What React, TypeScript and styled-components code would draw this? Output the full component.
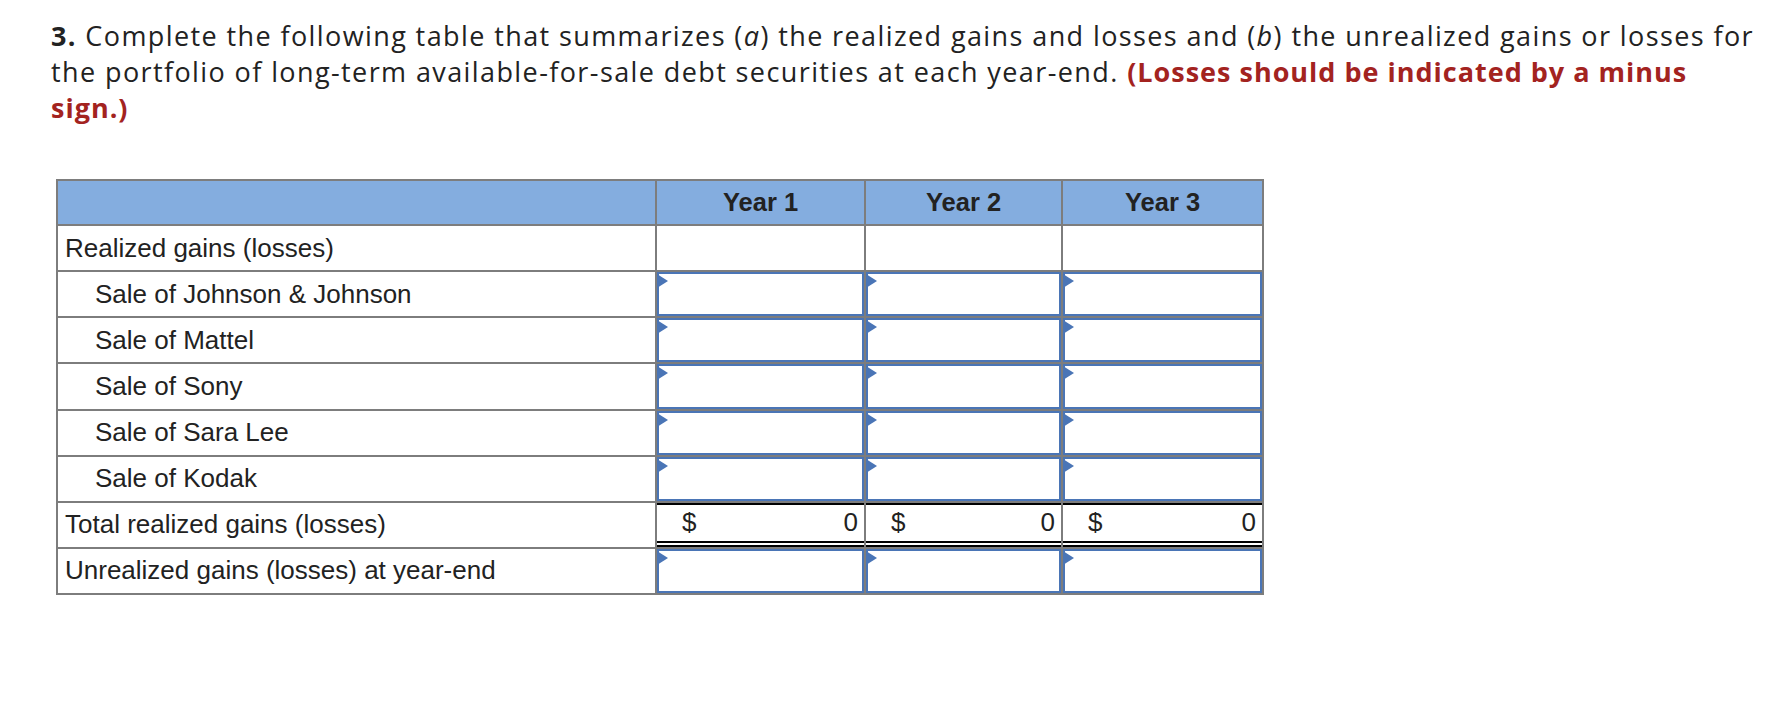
import React from 'react';
import styled, { createGlobalStyle } from 'styled-components';

const GlobalStyle = createGlobalStyle`
  html, body {
    margin: 0;
    padding: 0;
    background: #fff;
    overflow: hidden;
  }
  body {
    font-family: 'Open Sans', 'Liberation Sans', sans-serif;
    color: #222;
  }
`;

const Page = styled.div`
  padding: 18px 0 0 51px;
`;

const Question = styled.p`
  margin: 0;
  font-family: 'Open Sans', 'Liberation Sans', sans-serif;
  font-size: 27px;
  letter-spacing: 1.4px;
  line-height: 36px;
  color: #222;
  white-space: nowrap;
`;

const Warning = styled.span`
  color: #a3231f;
  font-weight: 700;
  letter-spacing: 1px;
`;

const Table = styled.div`
  display: grid;
  grid-template-columns: 599px 209px 197px 201px;
  grid-template-rows: 45px repeat(8, 46.125px);
  width: max-content;
  margin: 53px 0 0 5px;
  border-top: 2px solid #7d7d7d;
  border-left: 2px solid #7d7d7d;
  font-family: 'Liberation Sans', Arial, sans-serif;
  font-size: 26px;
  color: #222;
`;

const Cell = styled.div<{ $indent?: boolean }>`
  box-sizing: border-box;
  display: flex;
  align-items: center;
  min-width: 0;
  padding-left: ${({ $indent }) => ($indent ? 37 : 7)}px;
  border-right: 2px solid #7d7d7d;
  border-bottom: 2px solid #7d7d7d;
  background: #fff;
  white-space: nowrap;
`;

const HeadCell = styled(Cell)`
  justify-content: center;
  padding-left: 0;
  background: #84addf;
  font-weight: 700;
  font-size: 25.5px;
`;

const ValueCell = styled(Cell)`
  padding-left: 0;
  align-items: stretch;
`;

const InputBox = styled.div`
  position: relative;
  flex: 1;
  box-sizing: border-box;
  border: 2px solid #4a75b6;
  background: #fff;

  &::before {
    content: '';
    position: absolute;
    top: 0;
    left: -2px;
    width: 0;
    height: 0;
    border-top: 7px solid transparent;
    border-bottom: 7px solid transparent;
    border-left: 11px solid #4a75b6;
  }
`;

const TotalBox = styled.div`
  flex: 1;
  box-sizing: border-box;
  display: flex;
  align-items: center;
  justify-content: space-between;
  padding: 0 6px 0 25px;
  border-top: 2px solid #000;
  border-bottom: 6px double #000;
`;

type Kind = 'blank' | 'input' | 'total';

interface Row {
  label: string;
  indent?: boolean;
  kind: Kind;
}

const years = ['Year 1', 'Year 2', 'Year 3'];

const rows: Row[] = [
  { label: 'Realized gains (losses)', kind: 'blank' },
  { label: 'Sale of Johnson & Johnson', indent: true, kind: 'input' },
  { label: 'Sale of Mattel', indent: true, kind: 'input' },
  { label: 'Sale of Sony', indent: true, kind: 'input' },
  { label: 'Sale of Sara Lee', indent: true, kind: 'input' },
  { label: 'Sale of Kodak', indent: true, kind: 'input' },
  { label: 'Total realized gains (losses)', kind: 'total' },
  { label: 'Unrealized gains (losses) at year-end', kind: 'input' },
];

const renderValue = (kind: Kind) => {
  if (kind === 'input') return <InputBox />;
  if (kind === 'total')
    return (
      <TotalBox>
        <span>$</span>
        <span>0</span>
      </TotalBox>
    );
  return null;
};

const App: React.FC = () => {
  return (
    <Page>
      <GlobalStyle />
      <Question>
        <b>3.</b> Complete the following table that summarizes (<i>a</i>) the realized gains and
        losses and (<i>b</i>) the unrealized gains or losses for
        <br />
        the portfolio of long-term available-for-sale debt securities at each year-end.{' '}
        <Warning>
          (Losses should be indicated by a minus
          <br />
          sign.)
        </Warning>
      </Question>

      <Table>
        <HeadCell />
        {years.map((y) => (
          <HeadCell key={y}>{y}</HeadCell>
        ))}

        {rows.map((row) => (
          <React.Fragment key={row.label}>
            <Cell $indent={row.indent}>{row.label}</Cell>
            {years.map((y) => (
              <ValueCell key={y}>{renderValue(row.kind)}</ValueCell>
            ))}
          </React.Fragment>
        ))}
      </Table>
    </Page>
  );
};

export default App;
